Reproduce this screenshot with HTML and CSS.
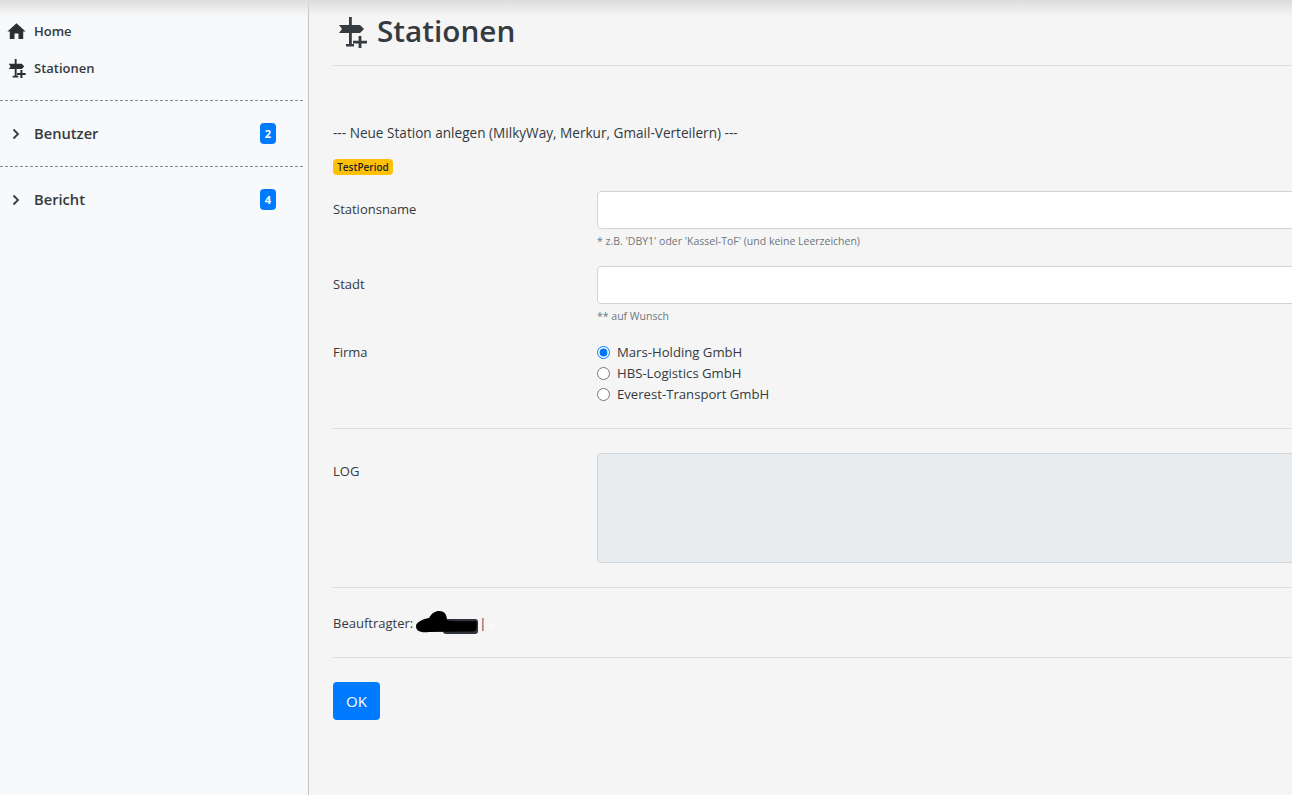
FILE: index.html
```html
<!DOCTYPE html>
<html lang="de">
<head>
<meta charset="utf-8">
<title>Stationen</title>
<link rel="stylesheet" href="styles.css">
</head>
<body>
<div class="top-shade"></div>
<div class="layout">
  <aside class="sidebar">
    <nav class="links">
      <a class="link">
        <svg class="link-icon" viewBox="0 0 24 24"><path d="M9.500 21.500v-7h5v7h6v-9.500h3L12 1.500 .5 12h3v9.500z"/></svg>
        <span>Home</span>
      </a>
      <a class="link">
        <svg class="link-icon" viewBox="0 0 32 32"><path d="M13 0h3.200v8H25l4 4.500-4 4.500h-8.800v11H19v3H9.500v-3H13V17H3l3-4.500L3 8h10z"/><path d="M22.500 18.500h3.500v5h5.500V27H26v5h-3.500v-5H17v-3.500h5.500z"/></svg>
        <span>Stationen</span>
      </a>
    </nav>
    <div class="group">
      <svg class="chevron" viewBox="0 0 10 12"><path d="M2.500 1.500 7 6l-4.500 4.500" fill="none" stroke="currentColor" stroke-width="1.800"/></svg>
      <span class="group-name">Benutzer</span>
      <span class="count">2</span>
    </div>
    <div class="group">
      <svg class="chevron" viewBox="0 0 10 12"><path d="M2.500 1.500 7 6l-4.500 4.500" fill="none" stroke="currentColor" stroke-width="1.800"/></svg>
      <span class="group-name">Bericht</span>
      <span class="count">4</span>
    </div>
  </aside>
  <main class="content">
    <header class="title">
      <svg class="title-icon" viewBox="0 0 32 32"><path d="M13 1h2.800v8H24l4 4-4 4h-8.200v11H18v2.500H10V28h3V17H3l3-4-3-4h10z"/><path d="M22.600 20h2.800v4.800H31v2.800h-5.600V32h-2.800v-4.400H17v-2.800h5.600z"/></svg>
      <h1>Stationen</h1>
    </header>
    <p class="intro">--- Neue Station anlegen (MilkyWay, Merkur, Gmail-Verteilern) ---</p>
    <span class="tag">TestPeriod</span>
    <form class="form">
      <div class="row row-name">
        <label class="label">Stationsname</label>
        <div class="field">
          <input class="input" type="text">
          <small class="help">* z.B. 'DBY1' oder 'Kassel-ToF' (und keine Leerzeichen)</small>
        </div>
      </div>
      <div class="row row-city">
        <label class="label">Stadt</label>
        <div class="field">
          <input class="input" type="text">
          <small class="help">** auf Wunsch</small>
        </div>
      </div>
      <div class="row row-company">
        <label class="label">Firma</label>
        <div class="field radios">
          <label class="radio"><input type="radio" name="firma" checked>Mars-Holding GmbH</label>
          <label class="radio"><input type="radio" name="firma">HBS-Logistics GmbH</label>
          <label class="radio"><input type="radio" name="firma">Everest-Transport GmbH</label>
        </div>
      </div>
      <hr class="rule rule-a">
      <div class="row">
        <label class="label">LOG</label>
        <div class="field"><div class="log"></div></div>
      </div>
      <hr class="rule rule-b">
      <p class="owner">Beauftragter:
        <svg class="redact" viewBox="0 0 64 26"><rect x="28" y="9" width="35" height="15" rx="3" fill="#2f353a"/><path d="M1 16c0-4 7-7 13-8 3-5 6-7 10-7 5 0 8 3 8 9.500 8 1 20 1 28 .5 2 0 2 3 1.500 7-.5 3-2 3.500-5 3.500L14 22C5 23 1 21 1 16z"/></svg>
        <span class="bar">|</span><span class="speck"></span>
      </p>
      <hr class="rule rule-c">
      <button class="btn" type="button">OK</button>
    </form>
  </main>
</div>
</body>
</html>
```
FILE: styles.css
```css
* { box-sizing: border-box; }
html, body { height: 100%; }
body {
  margin: 0;
  overflow: hidden;
  background: #f5f5f5;
  color: #343a40;
  font-family: "Open Sans", "Noto Sans", "Liberation Sans", sans-serif;
  font-size: 13px;
  line-height: 21px;
}
.top-shade {
  position: absolute;
  left: 0; top: 0; right: 0;
  height: 16px;
  background: linear-gradient(#dcdcdc, rgba(230,230,230,0));
  pointer-events: none;
}
.layout { display: flex; height: 100%; }
.sidebar {
  flex: 0 0 309px;
  background: #f8f9fa;
  border-right: 1px solid #c4c4c4;
  padding-top: 13px;
}
.links { display: flex; flex-direction: column; }
.link {
  display: flex;
  align-items: center;
  height: 37px;
  padding-left: 7px;
  font-weight: 600;
  font-size: 13px;
  color: #343a40;
}
.link-icon { width: 19px; height: 19px; fill: #2b2f33; margin-right: 8px; flex: none; }
.group {
  display: flex;
  align-items: center;
  height: 66px;
  width: 303px;
  border-top: 1px dashed #8a8a8a;
  padding-left: 11px;
}
.links + .group { margin-top: 13px; }
.chevron { width: 10px; height: 12px; margin-right: 13px; color: #343a40; flex: none; }
.group-name { flex: 1; font-size: 14.700px; font-weight: 600; }
.count {
  width: 16px;
  height: 21px;
  margin-right: 27px;
  border-radius: 4px;
  background: #007bff;
  color: #fff;
  font-size: 11px;
  font-weight: 700;
  text-align: center;
}
.content { flex: 1; min-width: 0; padding-left: 24px; overflow: hidden; }
.title {
  display: flex;
  align-items: center;
  height: 66px;
  padding: 0 0 2px 3px;
  border-bottom: 1px solid #dfdfdf;
}
.title-icon { width: 32px; height: 32px; fill: #343a40; margin-right: 9px; flex: none; }
h1 { margin: -1px 0 0; font-size: 29.700px; font-weight: 600; line-height: 40px; color: #343a40; }
.intro { margin: 56px 0 0; font-size: 13.600px; }
.tag {
  display: inline-block;
  margin-top: 16px;
  height: 16px;
  width: 60px;
  border-radius: 4px;
  background: #ffc107;
  color: #212529;
  font-size: 10px;
  font-weight: 600;
  line-height: 16px;
  text-align: center;
  vertical-align: top;
}
.form { margin-top: 16px; }
.row { display: flex; }
.label { flex: 0 0 264px; padding-top: 8px; }
.field { flex: 0 0 900px; }
.input {
  display: block;
  width: 100%;
  height: 38px;
  background: #fff;
  border: 1px solid #ced4da;
  border-radius: 4px;
}
.help { display: block; margin-top: 3px; font-size: 10.500px; line-height: 18px; color: #6c757d; }
.row-city { margin-top: 16px; }
.row-company { margin-top: 17px; }
.row-company .label { padding-top: 0; }
.radios { display: flex; flex-direction: column; }
.radio { display: flex; align-items: center; height: 21px; font-size: 13.150px; }
.radio input { width: 13px; height: 13px; margin: 0 7px 0 0; accent-color: #0075ff; }
.rule { margin: 0; height: 1px; border: 0; background: #dfdfdf; }
.rule-a { margin: 23px 0 24px; }
.rule-b { margin: 24px 0 0; }
.rule-c { margin: 0 0 24px; }
.log {
  height: 110px;
  background: #e9ecef;
  border: 1px solid #ced4da;
  border-radius: 4px;
}
.owner { display: flex; align-items: center; height: 69px; margin: 0; padding-top: 2px; }
.redact { width: 64px; height: 26px; margin: -2px 0 0 2px; flex: none; }
.bar { color: #343a40; margin-left: 0; }
.speck { width: 7px; height: 5px; margin: 3px 0 0 2px; border-radius: 50%; background: #f8f9fa; }
.btn {
  display: block;
  width: 47px;
  height: 38px;
  padding: 0;
  border: 0;
  border-radius: 4px;
  background: #007bff;
  color: #fff;
  font: inherit;
  font-size: 15px;
}
```
